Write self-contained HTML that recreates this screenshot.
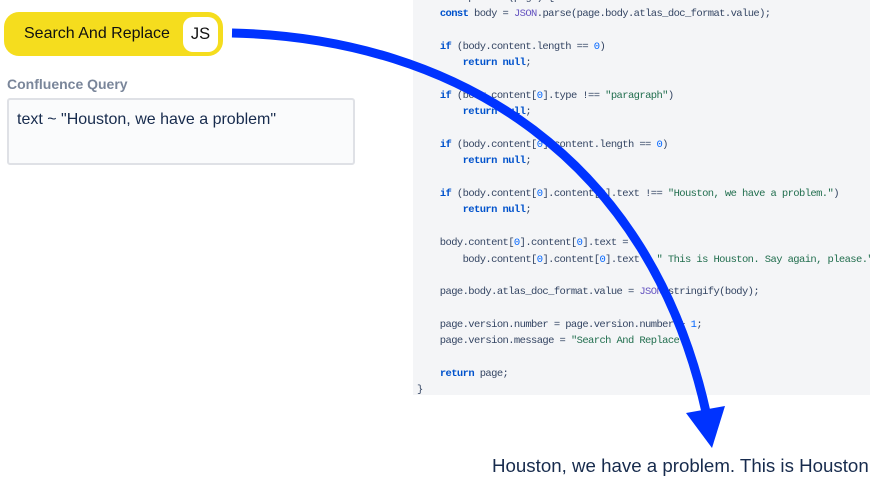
<!DOCTYPE html>
<html><head><meta charset="utf-8"><style>
body{margin:0;width:870px;height:494px;background:#fff;position:relative;overflow:hidden;font-family:"Liberation Sans",sans-serif}
.pill{position:absolute;left:4px;top:12px;width:219px;height:44px;background:#f5dd1e;border-radius:15px}
.pill span{position:absolute;left:20px;top:13px;font-size:16px;color:#111}
.js{position:absolute;left:179px;top:5px;width:35px;height:35px;background:#fff;border-radius:10px;font-size:16.5px;color:#111;text-align:center;line-height:35px}
.lbl{position:absolute;left:7px;top:76px;font-size:14px;font-weight:bold;color:#7a869a}
.ta{position:absolute;left:7px;top:98px;width:344px;height:63px;background:#fafbfc;border:2px solid #dfe1e6;border-radius:3px}
.ta span{position:absolute;left:8px;top:11px;font-size:16px;color:#172b4d}
.code{position:absolute;left:413px;top:0;width:457px;height:395px;background:#f4f5f7}
pre{margin:0;position:absolute;left:417px;top:-10px;font-family:"Liberation Mono",monospace;font-size:10.5px;letter-spacing:-0.6px;line-height:16.35px;color:#344563}
.k{color:#0052cc;font-weight:bold}.s{color:#216e4e}.n{color:#0065ff}.j{color:#6554c0}
.out{position:absolute;left:492px;top:455px;font-size:18.7px;color:#172b4d;white-space:nowrap}
</style></head><body>
<div class="pill"><span>Search And Replace</span><div class="js">JS</div></div>
<div class="lbl">Confluence Query</div>
<div class="ta"><span>text ~ "Houston, we have a problem"</span></div>
<div class="code"></div>
<pre><span class="k">function</span> process(page) {
    <span class="k">const</span> body = <span class="j">JSON</span>.parse(page.body.atlas_doc_format.value);

    <span class="k">if</span> (body.content.length == <span class="n">0</span>)
        <span class="k">return null</span>;

    <span class="k">if</span> (body.content[<span class="n">0</span>].type !== <span class="s">"paragraph"</span>)
        <span class="k">return null</span>;

    <span class="k">if</span> (body.content[<span class="n">0</span>].content.length == <span class="n">0</span>)
        <span class="k">return null</span>;

    <span class="k">if</span> (body.content[<span class="n">0</span>].content[<span class="n">0</span>].text !== <span class="s">"Houston, we have a problem."</span>)
        <span class="k">return null</span>;

    body.content[<span class="n">0</span>].content[<span class="n">0</span>].text =
        body.content[<span class="n">0</span>].content[<span class="n">0</span>].text + <span class="s">" This is Houston. Say again, please."</span>;

    page.body.atlas_doc_format.value = <span class="j">JSON</span>.stringify(body);

    page.version.number = page.version.number + <span class="n">1</span>;
    page.version.message = <span class="s">"Search And Replace"</span>;

    <span class="k">return</span> page;
}</pre>
<div class="out">Houston, we have a problem. This is Houston</div>
<svg style="position:absolute;left:0;top:0" width="870" height="494">
<path d="M232 33 C 460 38, 650 160, 706 412" fill="none" stroke="#0033ff" stroke-width="9"/>
<polygon points="686,413 725,406 712,448" fill="#0033ff"/>
</svg>
</body></html>
